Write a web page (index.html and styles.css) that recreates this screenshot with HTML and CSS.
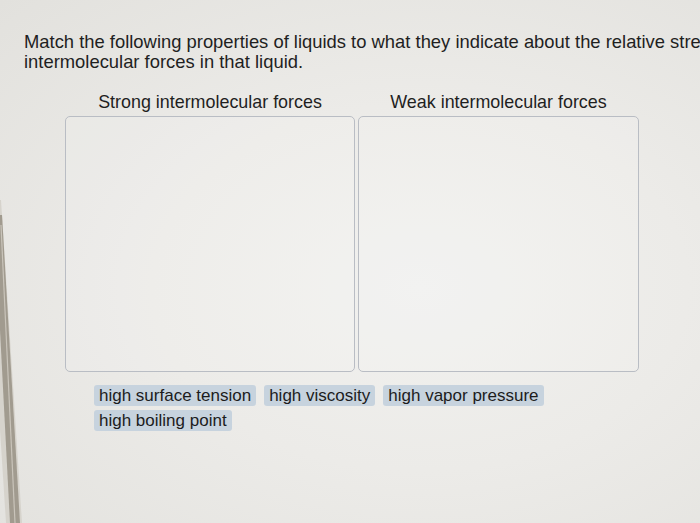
FILE: index.html
```html
<!DOCTYPE html>
<html lang="en">
<head>
<meta charset="utf-8">
<title>Matching question</title>
<link rel="stylesheet" href="styles.css">
</head>
<body>
<main class="page">
  <p class="prompt">Match the following properties of liquids to what they indicate about the relative strength of the intermolecular forces in that liquid.</p>

  <section class="match">
    <div class="targets">
      <div class="target">
        <h3 class="target-title">Strong intermolecular forces</h3>
        <div class="dropzone"></div>
      </div>
      <div class="target">
        <h3 class="target-title">Weak intermolecular forces</h3>
        <div class="dropzone"></div>
      </div>
    </div>

    <ul class="pool">
      <li class="chip">high surface tension</li>
      <li class="chip">high viscosity</li>
      <li class="chip">high vapor pressure</li>
      <li class="chip">high boiling point</li>
    </ul>
  </section>
</main>

<!-- monitor bezel edge along the left side -->
<svg class="bezel" width="30" height="523" viewBox="0 0 30 523" aria-hidden="true">
  <polygon points="0,200 1,200 22,523 6,523 0,430" fill="#d6d3cc"/>
  <polygon points="0,215 2,215 20,523 10,523 0,330" fill="#a19b8f"/>
  <line x1="1" y1="225" x2="15" y2="523" stroke="#c9c4ba" stroke-width="1.2"/>
</svg>
</body>
</html>
```

FILE: styles.css
```css
* {
  box-sizing: border-box;
}

html, body {
  margin: 0;
  height: 100%;
}

body {
  background:
    radial-gradient(ellipse at 60% 55%, #f1f1ef 0%, #ecebe8 45%, #e2e1dd 100%);
  color: #1f1f1f;
  font-family: "Liberation Sans", Arial, sans-serif;
  overflow: hidden;
  position: relative;
}

.page {
  width: 820px;
  padding: 32px 0 0 24px;
}

.prompt {
  margin: 0;
  font-size: 18.4px;
  line-height: 20px;
  width: 790px;
}

.match {
  margin: 20px 0 0 41px;
}

.targets {
  display: flex;
  gap: 3px;
}

.target {
  width: 290px;
}

.target + .target {
  width: 281px;
}

.target-title {
  margin: 0 0 4px;
  font-size: 17.9px;
  font-weight: normal;
  line-height: 20px;
  text-align: center;
}

.dropzone {
  height: 256px;
  border: 1px solid #b9bdc4;
  border-radius: 5px;
  background: rgba(255, 255, 255, 0.12);
}

.pool {
  list-style: none;
  margin: 13px 0 0 29px;
  padding: 0;
  width: 480px;
  display: flex;
  flex-wrap: wrap;
  gap: 4px 8px;
}

.chip {
  background: #c7d3de;
  border-radius: 3px;
  padding: 0 5px;
  height: 21px;
  line-height: 21px;
  font-size: 17px;
  color: #1c1c1c;
}

.bezel {
  position: absolute;
  left: 0;
  top: 0;
}
```
